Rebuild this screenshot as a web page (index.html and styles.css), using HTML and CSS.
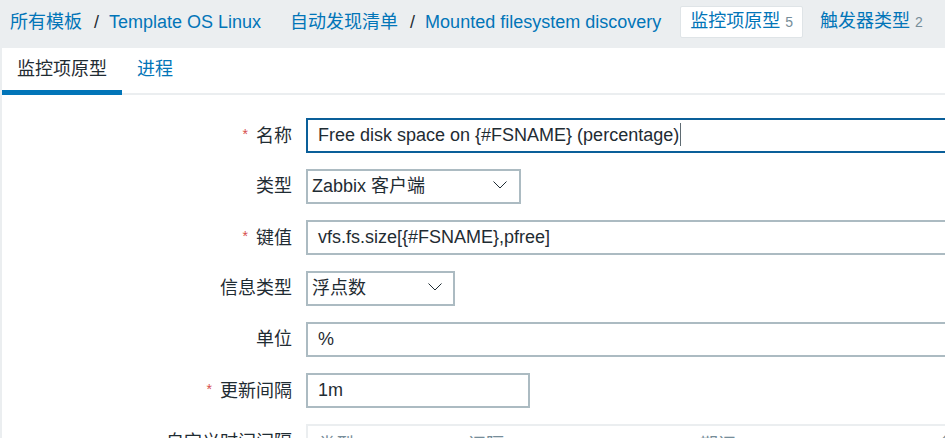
FILE: index.html
```html
<!DOCTYPE html>
<html lang="zh-CN">
<head>
<meta charset="utf-8">
<title>监控项原型</title>
<link rel="stylesheet" href="styles.css">
</head>
<body>
<header class="nav">
  <ul class="crumbs">
    <li><a class="link">所有模板</a></li>
    <li><a class="link">Template OS Linux</a></li>
  </ul>
  <ul class="crumbs crumbs-last">
    <li><a class="link">自动发现清单</a></li>
    <li><a class="link">Mounted filesystem discovery</a></li>
  </ul>
  <ul class="sections">
    <li class="section selected"><a class="link">监控项原型</a><span class="count">5</span></li>
    <li class="section"><a class="link">触发器类型</a><span class="count">2</span></li>
  </ul>
</header>
<main class="content">
  <nav class="tabs">
    <a class="tab active">监控项原型</a>
    <a class="tab">进程</a>
  </nav>
  <div class="form">
    <label class="label req">名称</label>
    <div class="field wide focus">Free disk space on {#FSNAME} (percentage)<span class="caret"></span></div>

    <label class="label">类型</label>
    <div class="field select type-select"><span>Zabbix 客户端</span><svg class="chev" width="14" height="8" viewBox="0 0 14 8"><polyline points="0.5,0.5 7,7 13.5,0.5" fill="none" stroke="#1f2c33" stroke-width="1"/></svg></div>

    <label class="label req">键值</label>
    <div class="field wide">vfs.fs.size[{#FSNAME},pfree]</div>

    <label class="label">信息类型</label>
    <div class="field select info-select"><span>浮点数</span><svg class="chev" width="14" height="8" viewBox="0 0 14 8"><polyline points="0.5,0.5 7,7 13.5,0.5" fill="none" stroke="#1f2c33" stroke-width="1"/></svg></div>

    <label class="label">单位</label>
    <div class="field wide">%</div>

    <label class="label req">更新间隔</label>
    <div class="field interval">1m</div>

    <label class="label label-top">自定义时间间隔</label>
    <div class="intervals">
      <div class="int-head">
        <span>类型</span>
        <span>间隔</span>
        <span>期间</span>
        <span>行动</span>
      </div>
    </div>
  </div>
</main>
</body>
</html>
```

FILE: styles.css
```css
html, body {
  margin: 0;
  height: 100%;
  overflow: hidden;
}

body {
  font-family: "Liberation Sans", Arial, "Noto Sans CJK SC", sans-serif;
  font-size: 18px;
  line-height: 21px;
  color: #1f2c33;
  background: #ebeef0;
}

ul {
  list-style: none;
  margin: 0;
  padding: 0;
}

.link {
  color: #0275b8;
  text-decoration: none;
}

/* top navigation */
.nav {
  display: flex;
  align-items: center;
  height: 48px;
  padding-left: 10px;
  box-sizing: border-box;
  padding-bottom: 4px;
  white-space: nowrap;
}

.crumbs {
  display: flex;
  margin-right: 29px;
}

.crumbs-last {
  margin-right: 19px;
}

.crumbs li + li::before {
  content: "/";
  color: #1f2c33;
  margin: 0 10px 0 12px;
}

.sections {
  display: flex;
  gap: 7px;
}

.section {
  padding: 4px 9px;
  border: 1px solid transparent;
  border-radius: 2px;
}

.section.selected {
  background: #fff;
  border-color: #dfe4e7;
}

.count {
  font-size: 14px;
  color: #768d99;
  margin-left: 5px;
}

/* content */
.content {
  margin-left: 2px;
  background: #fff;
  height: calc(100% - 48px);
}

.tabs {
  display: flex;
  height: 47px;
  box-shadow: inset 0 -2px 0 #ebeef0;
}

.tab {
  box-sizing: border-box;
  height: 47px;
  padding: 11px 15px 0 15px;
  color: #0275b8;
}

.tab.active {
  color: #1f2c33;
  border-bottom: 5px solid #0275b8;
}

/* form */
.form {
  display: grid;
  grid-template-columns: 290px auto;
  column-gap: 14px;
  row-gap: 16px;
  align-items: center;
  padding-top: 23px;
}

.label {
  text-align: right;
  white-space: nowrap;
}

.label.req::before {
  content: "*";
  color: #d64e4e;
  font-size: 14px;
  vertical-align: 3px;
  margin-right: 8px;
}

.label-top {
  align-self: start;
  padding-top: 8px;
}

.field {
  box-sizing: border-box;
  height: 35px;
  border: 2px solid #acbbc2;
  background: #fff;
  padding: 0 10px;
  line-height: 31px;
  white-space: nowrap;
  overflow: hidden;
}

.wide {
  width: 700px;
}

.focus {
  border-color: #0a5f99;
}

.caret {
  display: inline-block;
  width: 1px;
  height: 23px;
  background: #5f6b72;
  vertical-align: -5px;
  margin-left: 1px;
}

.select {
  display: flex;
  align-items: center;
  justify-content: space-between;
  padding: 0 12px 0 4px;
}

.chev {
  display: block;
  margin-top: -3px;
}

.type-select {
  width: 215px;
}

.info-select {
  width: 149px;
  padding-right: 11px;
}

.interval {
  width: 224px;
}

.intervals {
  box-sizing: border-box;
  width: 700px;
  height: 80px;
  border: 2px solid #ebeef0;
  padding: 9px 0 0 10px;
}

.int-head {
  display: grid;
  grid-template-columns: 150px 232px 240px auto;
  color: #768d99;
  white-space: nowrap;
}
```
